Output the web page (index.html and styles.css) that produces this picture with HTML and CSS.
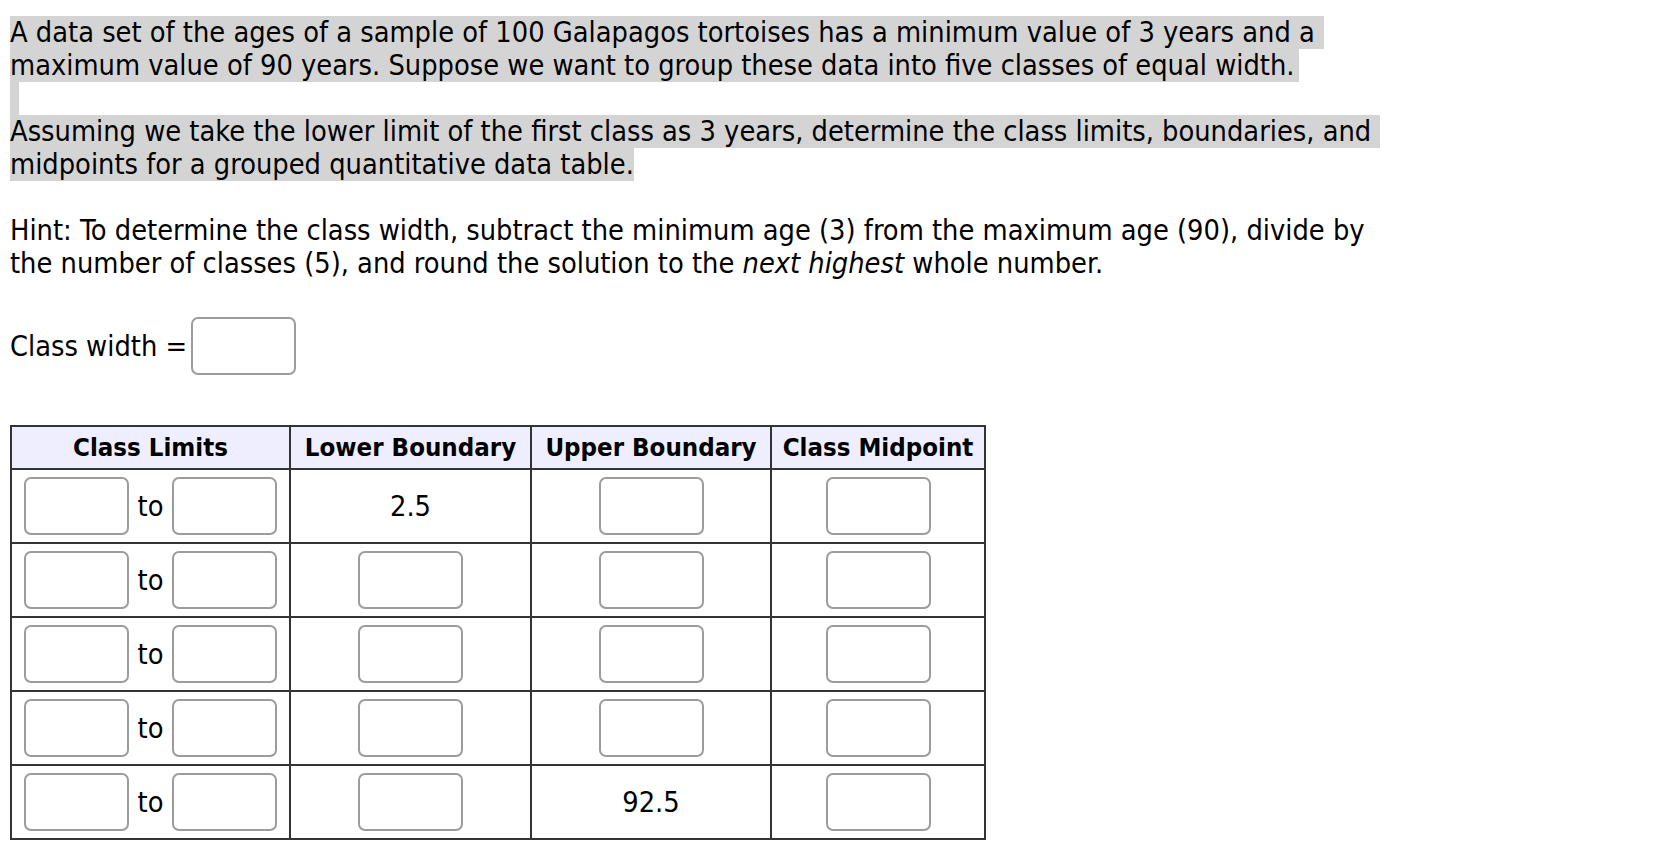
FILE: index.html
```html
<!DOCTYPE html>
<html lang="en">
<head>
<meta charset="utf-8">
<title>Class limits</title>
<link rel="stylesheet" href="styles.css">
</head>
<body>
<div class="page">
  <div class="para">
    <span class="sel trail">A data set of the ages of a sample of 100 Galapagos tortoises has a minimum value of 3 years and a</span>
    <span class="sel short">maximum value of 90 years. Suppose we want to group these data into five classes of equal width.</span>
  </div>
  <div class="blank"><span class="sel-nl"></span></div>
  <div class="para">
    <span class="sel trail">Assuming we take the lower limit of the first class as 3 years, determine the class limits, boundaries, and</span>
    <span class="sel">midpoints for a grouped quantitative data table.</span>
  </div>
  <div class="blank"></div>
  <div class="para">
    <span class="line">Hint: To determine the class width, subtract the minimum age (3) from the maximum age (90), divide by</span>
    <span class="line">the number of classes (5), and round the solution to the <em>next highest</em> whole number.</span>
  </div>
  <div class="width-row">
    <span class="label">Class width =</span>
    <input class="box" type="text">
  </div>
  <table class="grid">
    <colgroup>
      <col class="c1"><col class="c2"><col class="c3"><col class="c4">
    </colgroup>
    <thead>
      <tr><th>Class Limits</th><th>Lower Boundary</th><th>Upper Boundary</th><th>Class Midpoint</th></tr>
    </thead>
    <tbody>
      <tr>
        <td><div class="limits"><input class="box" type="text"><span>to</span><input class="box" type="text"></div></td>
        <td>2.5</td>
        <td><input class="box" type="text"></td>
        <td><input class="box" type="text"></td>
      </tr>
      <tr>
        <td><div class="limits"><input class="box" type="text"><span>to</span><input class="box" type="text"></div></td>
        <td><input class="box" type="text"></td>
        <td><input class="box" type="text"></td>
        <td><input class="box" type="text"></td>
      </tr>
      <tr>
        <td><div class="limits"><input class="box" type="text"><span>to</span><input class="box" type="text"></div></td>
        <td><input class="box" type="text"></td>
        <td><input class="box" type="text"></td>
        <td><input class="box" type="text"></td>
      </tr>
      <tr>
        <td><div class="limits"><input class="box" type="text"><span>to</span><input class="box" type="text"></div></td>
        <td><input class="box" type="text"></td>
        <td><input class="box" type="text"></td>
        <td><input class="box" type="text"></td>
      </tr>
      <tr>
        <td><div class="limits"><input class="box" type="text"><span>to</span><input class="box" type="text"></div></td>
        <td><input class="box" type="text"></td>
        <td>92.5</td>
        <td><input class="box" type="text"></td>
      </tr>
    </tbody>
  </table>
</div>
</body>
</html>
```
FILE: styles.css
```css
html, body {
  margin: 0;
  padding: 0;
  background: #ffffff;
}

body {
  font-family: "DejaVu Sans Condensed", "DejaVu Sans", sans-serif;
  font-size: 28.7px;
  line-height: 33px;
  color: #000000;
}

.page {
  padding: 16px 10px 0 10px;
}

.para {
  display: flex;
  flex-direction: column;
  align-items: flex-start;
}

.sel {
  display: block;
  height: 33px;
  white-space: nowrap;
  background: #d4d4d4;
}

.sel.trail {
  padding-right: 9px;
}

.sel.short {
  padding-right: 4px;
}

.line {
  display: block;
  height: 33px;
  white-space: nowrap;
}

.blank {
  height: 33px;
}

.sel-nl {
  display: block;
  width: 9px;
  height: 33px;
  background: #d4d4d4;
}

.width-row {
  display: flex;
  align-items: center;
  gap: 4px;
  margin-top: 37px;
}

.label {
  white-space: nowrap;
}

.box {
  box-sizing: border-box;
  width: 105px;
  height: 58px;
  border: 2px solid #9c9c9c;
  border-radius: 7px;
  background: #ffffff;
  margin: 0;
  padding: 0;
  font: inherit;
  outline: none;
}

.grid {
  margin-top: 50px;
  border-collapse: collapse;
  table-layout: fixed;
  width: 974px;
}

.c1 { width: 279px; }
.c2 { width: 241px; }
.c3 { width: 240px; }
.c4 { width: 214px; }

.grid th,
.grid td {
  border: 2px solid #333333;
  text-align: center;
  vertical-align: middle;
}

.grid th {
  background: #eeeeff;
  font-weight: bold;
  font-size: 25.6px;
  height: 41px;
  padding: 0 2px;
  white-space: nowrap;
}

.grid td {
  padding: 7px 10px;
  height: 58px;
}

.grid td .box {
  display: block;
  margin: 0 auto;
}

.limits {
  display: flex;
  align-items: center;
  justify-content: space-between;
}

.limits span {
  padding: 0 6px;
}
```
